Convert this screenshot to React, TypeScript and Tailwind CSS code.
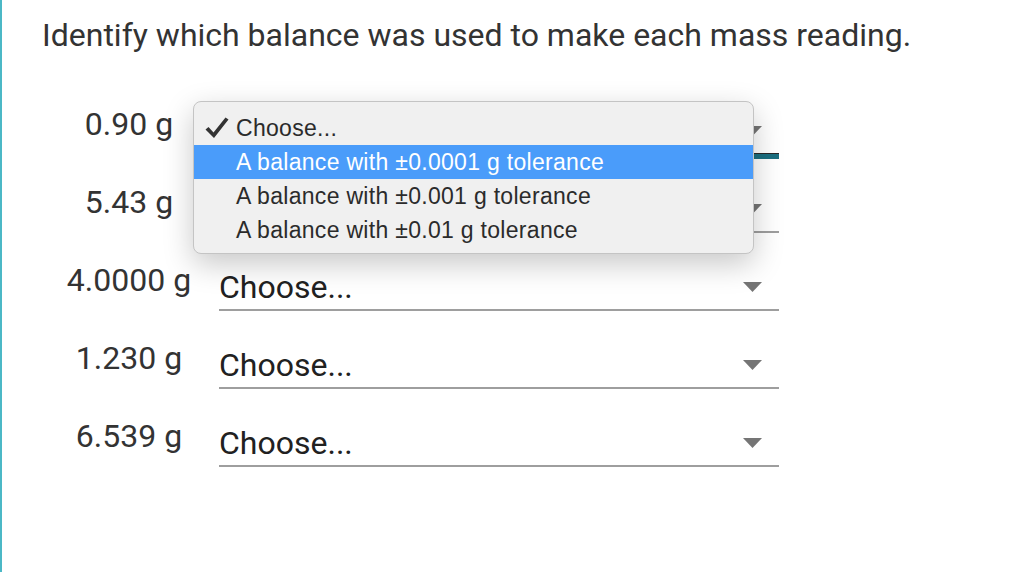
import React from "react";

const rows = ["0.90 g", "5.43 g", "4.0000 g", "1.230 g", "6.539 g"];

const options = [
  "A balance with ±0.0001 g tolerance",
  "A balance with ±0.001 g tolerance",
  "A balance with ±0.01 g tolerance",
];

const Arrow = () => (
  <svg className="absolute right-[17px] top-[23px]" width="19" height="10" viewBox="0 0 19 10">
    <path d="M0 0 L19 0 L9.5 10 Z" fill="#757575" />
  </svg>
);

const Check = () => (
  <svg className="absolute left-[11px] top-[6px]" width="24" height="22" viewBox="0 0 24 22">
    <path d="M0.5 12.5 L3.5 10 L8.5 15.5 L20.5 0.5 L23.5 2.5 L9 21 Z" fill="#333" />
  </svg>
);

const App: React.FC = () => {
  return (
    <div className="relative w-[1018px] h-[572px] bg-white border-l-2 border-[#4bb8c6] overflow-hidden font-['Roboto',sans-serif]">
      <div className="pl-[40px] pt-[16px]">
        <h1 className="text-[32px] leading-[38px] text-[#333] font-normal">
          Identify which balance was used to make each mass reading.
        </h1>

        <div className="mt-[49px] flex flex-col gap-[26px]">
          {rows.map((label, i) => (
            <div key={label} className="flex items-start h-[52px]">
              <div className="w-[174px] mt-[3px] text-center text-[32px] leading-[36px] text-[#333]">
                {label}
              </div>
              <div className="relative ml-[3px] w-[560px] h-[52px]">
                <div className="pt-[10px] text-[32px] leading-[36px] text-[#212121]">Choose...</div>
                <Arrow />
                {i === 0 ? (
                  <div className="absolute left-0 right-0 bottom-[-4px] h-[6px] border-t border-[#2a2a2a] bg-[#1b6f80]" />
                ) : (
                  <div className="absolute left-0 right-0 bottom-0 h-[2px] bg-[#9e9e9e]" />
                )}
              </div>
            </div>
          ))}
        </div>
      </div>

      {/* open native select menu */}
      <div className="absolute left-[191px] top-[101px] w-[561px] h-[153px] rounded-[8px] border border-[#c4c4c4] bg-[#f0f0f0] shadow-[0_10px_30px_rgba(0,0,0,0.22)] pt-[9px] font-['Liberation_Sans',sans-serif] text-[23px] tracking-[0.3px] text-[#2b2b2b]">
        <div className="relative h-[34px] flex items-center pl-[42px]">
          <Check />
          Choose...
        </div>
        {options.map((o, i) => (
          <div
            key={o}
            className={
              i === 0
                ? "h-[34px] flex items-center pl-[42px] bg-[#4a9cfa] text-white"
                : "h-[34px] flex items-center pl-[42px]"
            }
          >
            {o}
          </div>
        ))}
      </div>
    </div>
  );
};

export default App;
